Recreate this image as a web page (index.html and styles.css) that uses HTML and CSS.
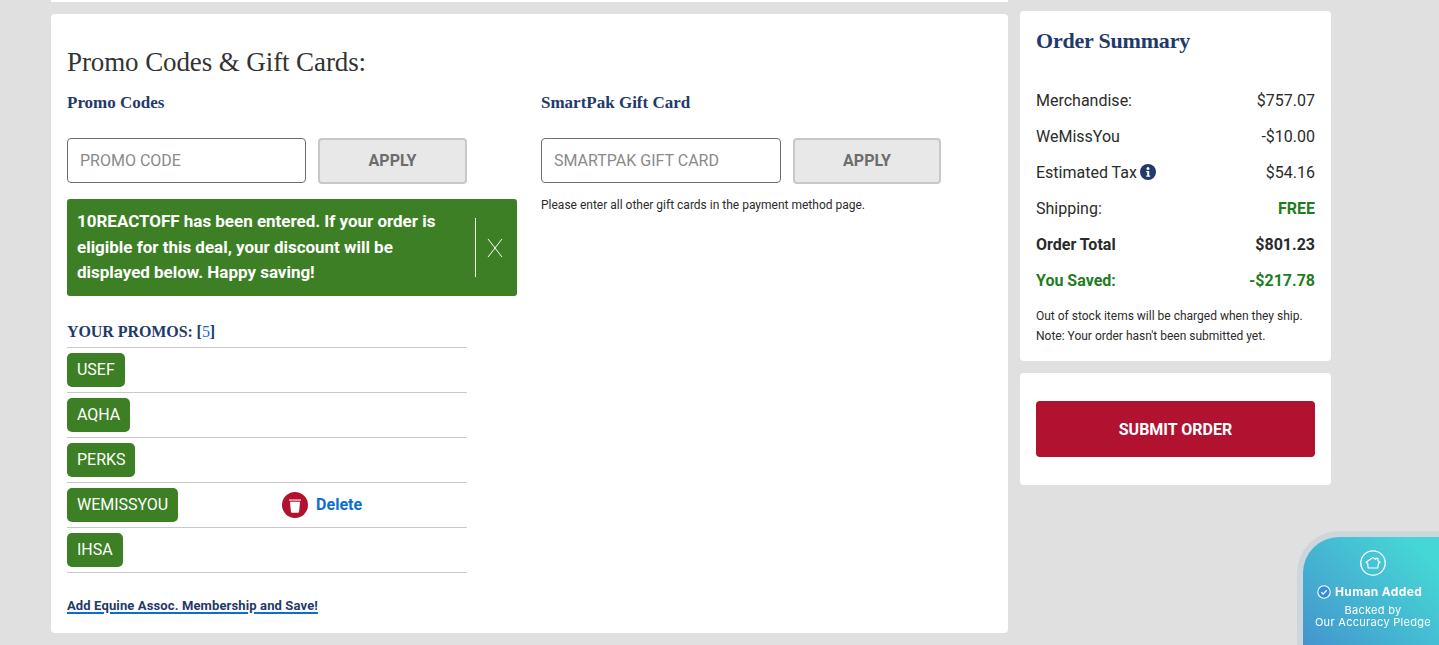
FILE: index.html
```html
<!DOCTYPE html>
<html lang="en">
<head>
<meta charset="utf-8">
<title>Checkout</title>
<link rel="stylesheet" href="styles.css">
</head>
<body>
<div class="page">
  <main class="main-col">
    <div class="top-strip"></div>
    <section class="card promo-card">
      <h2 class="promo-title">Promo Codes &amp; Gift Cards:</h2>
      <div class="promo-cols">
        <div class="col-left">
          <h3 class="sub-title">Promo Codes</h3>
          <div class="field-row">
            <input class="text-input input-promo" type="text" placeholder="PROMO CODE">
            <button class="apply-btn btn-promo" type="button">APPLY</button>
          </div>
          <div class="alert">
            <p class="alert-text">10REACTOFF has been entered. If your order is eligible for this deal, your discount will be displayed below. Happy saving!</p>
            <div class="alert-close">
              <svg class="alert-x" width="16" height="20" viewBox="0 0 16 20"><path d="M1 1 L15 19 M15 1 L1 19" stroke="#fff" stroke-width="1" fill="none"/></svg>
            </div>
          </div>
          <h4 class="your-promos">YOUR PROMOS: [<span class="count">5</span>]</h4>
          <ul class="promo-list">
            <li class="promo-row"><span class="tag">USEF</span></li>
            <li class="promo-row"><span class="tag">AQHA</span></li>
            <li class="promo-row"><span class="tag">PERKS</span></li>
            <li class="promo-row">
              <span class="tag tag-fixed">WEMISSYOU</span>
              <a class="delete" href="#">
                <svg class="trash" width="26" height="26" viewBox="0 0 26 26"><circle cx="13" cy="13" r="13" fill="#b0122f"/><path d="M7 7.3h12v1.5H7z" fill="#f0b9c4"/><path d="M8 9.8h10l-.9 9.6c-.1.8-.6 1.3-1.3 1.3h-5.6c-.7 0-1.2-.5-1.3-1.3z" fill="#fff"/></svg>
                <span>Delete</span>
              </a>
            </li>
            <li class="promo-row"><span class="tag">IHSA</span></li>
          </ul>
          <a class="assoc-link" href="#">Add Equine Assoc. Membership and Save!</a>
        </div>
        <div class="col-right">
          <h3 class="sub-title">SmartPak Gift Card</h3>
          <div class="field-row">
            <input class="text-input input-gift" type="text" placeholder="SMARTPAK GIFT CARD">
            <button class="apply-btn btn-gift" type="button">APPLY</button>
          </div>
          <p class="gift-note">Please enter all other gift cards in the payment method page.</p>
        </div>
      </div>
    </section>
  </main>
  <aside class="side-col">
    <section class="card summary-card">
      <h2 class="summary-title">Order Summary</h2>
      <div class="sum-rows">
        <div class="sum-row"><span>Merchandise:</span><span>$757.07</span></div>
        <div class="sum-row"><span>WeMissYou</span><span>-$10.00</span></div>
        <div class="sum-row"><span class="with-icon">Estimated Tax
          <svg class="info" width="16" height="16" viewBox="0 0 16 16"><circle cx="8" cy="8" r="8" fill="#1f3a6b"/><circle cx="8" cy="4.4" r="1.5" fill="#fff"/><path d="M6.2 7h3v4.6h1v1.2H6.2v-1.2h1V8.2h-1z" fill="#fff"/></svg></span><span>$54.16</span></div>
        <div class="sum-row"><span>Shipping:</span><span class="green strong">FREE</span></div>
        <div class="sum-row strong"><span>Order Total</span><span>$801.23</span></div>
        <div class="sum-row strong green"><span>You Saved:</span><span>-$217.78</span></div>
      </div>
      <p class="sum-note">Out of stock items will be charged when they ship.<br>Note: Your order hasn't been submitted yet.</p>
    </section>
    <section class="card submit-card">
      <button class="submit-btn" type="button">SUBMIT ORDER</button>
    </section>
  </aside>
</div>
<div class="badge">
  <svg class="badge-home" width="26" height="26" viewBox="0 0 26 26" fill="none" stroke="#fff"><circle cx="13" cy="13" r="12.2" stroke-width="1.3"/><path d="M6 12.2 L13 7.6 L15.8 9.4 V8.4 H18 V10.9 L20 12.2 L18.4 13.4 L17.8 18 H8.2 L7.6 13.4 Z" stroke-width="1.2" stroke-linejoin="round"/></svg>
  <div class="badge-head">
    <svg width="14" height="14" viewBox="0 0 14 14"><circle cx="7" cy="7" r="6.2" fill="#2f8fdc" stroke="#fff" stroke-width="1.1"/><path d="M4.3 7.2 L6.2 9 L9.7 5.3" stroke="#fff" stroke-width="1.3" fill="none"/></svg>
    <span>Human Added</span>
  </div>
  <div class="badge-sub">Backed by<br>Our Accuracy Pledge</div>
</div>
</body>
</html>
```
FILE: styles.css
```css
* { box-sizing: border-box; }
html, body { margin: 0; height: 100%; overflow: hidden; }
body { background: #e0e0e0; font-family: Roboto, "Liberation Sans", sans-serif; color: #2b2b2b; }
h2, h3, h4, p, ul { margin: 0; padding: 0; }
ul { list-style: none; }

.page { display: flex; align-items: flex-start; gap: 12px; padding-left: 51px; }
.main-col { width: 957px; }
.side-col { width: 311px; padding-top: 11px; display: flex; flex-direction: column; gap: 12px; }
.card { background: #fff; border-radius: 4px; }
.top-strip { height: 2px; background: #fff; margin-bottom: 12px; }

.promo-card { height: 619px; padding: 32px 16px 0; }
.promo-title { font: 400 27px/32px "Liberation Serif", serif; color: #333; letter-spacing: -.1px; }
.promo-cols { display: flex; margin-top: 12px; }
.col-left { width: 474px; }
.col-right { width: 400px; }
.sub-title { font: 700 17px/24px "Liberation Serif", serif; color: #1f3a6b; padding-top: 1px; box-sizing: content-box; }
.field-row { display: flex; margin-top: 23px; }
.text-input { height: 45px; border: 1px solid #6f6f6f; border-radius: 4px; padding: 0 12px; font: 400 16px Roboto, sans-serif; background: #fff; outline: 0; }
.text-input::placeholder { color: #8a8a8a; opacity: 1; }
.input-promo { width: 239px; }
.input-gift { width: 240px; }
.apply-btn { height: 46px; background: #e8e8e8; border: 2px solid #c8c8c8; border-radius: 4px; font: 700 16px Roboto, sans-serif; color: #6c6c6c; margin-left: 12px; padding: 0 0 2px; }
.btn-promo { width: 149px; }
.btn-gift { width: 148px; }

.alert { width: 450px; height: 97px; margin-top: 15px; background: #3c7f24; border-radius: 3px; display: flex; align-items: center; padding: 9px 0 9px 10px; color: #fff; }
.alert-text { width: 398px; padding-right: 30px; font: 700 17px/25.7px Roboto, sans-serif; letter-spacing: -.02px; }
.alert-close { height: 59px; border-left: 1px solid #fff; flex: 1; display: flex; align-items: center; padding-left: 11px; }

.your-promos { font: 700 16px/24px "Liberation Serif", serif; color: #1f3a6b; margin-top: 24px; letter-spacing: -.08px; }
.count { color: #0a6fd0; font-weight: 400; }
.promo-list { width: 400px; border-top: 1px solid #c8c8c8; margin-top: 3px; }
.promo-row { height: 45px; border-bottom: 1px solid #c8c8c8; display: flex; align-items: center; padding-bottom: 1px; }
.tag { background: #3c7f24; color: #fff; border-radius: 5px; height: 34px; line-height: 34px; padding: 0 10px; font-size: 16px; letter-spacing: -.03px; }
.tag-fixed { margin-right: 104px; }
.delete { display: flex; align-items: center; gap: 8px; color: #0a6fd0; font-weight: 700; font-size: 16px; text-decoration: none; }
.trash { display: block; }
.assoc-link { display: inline-block; margin-top: 24px; font-size: 13px; line-height: 18px; font-weight: 700; color: #1f3a6b; letter-spacing: .13px; text-decoration: underline; text-decoration-color: #0a6fd0; text-underline-offset: 2px; text-decoration-thickness: 1.5px; }
.gift-note { font-size: 12px; line-height: 16px; margin-top: 13px; }

.summary-card { height: 350px; padding: 16px 16px 0; }
.summary-title { font: 700 22px/28px "Liberation Serif", serif; color: #1f3a6b; letter-spacing: -.2px; }
.sum-rows { margin-top: 27px; }
.sum-row { display: flex; justify-content: space-between; align-items: center; height: 36px; font-size: 16px; }
.with-icon { display: flex; align-items: center; gap: 3px; }
.strong { font-weight: 700; }
.green { color: #1f7d1f; }
.sum-note { font-size: 12px; line-height: 20px; margin-top: 8px; }
.submit-card { height: 112px; padding: 28px 16px 0; }
.submit-btn { width: 100%; height: 56px; background: #b0122f; border: 0; border-radius: 4px; color: #fff; font: 700 16px Roboto, sans-serif; padding: 0; }

.badge { position: fixed; left: 1297px; top: 531px; width: 150px; height: 130px; border: 6px solid #cdd6db; border-right: 0; border-bottom: 0; border-top-left-radius: 42px; background: linear-gradient(45deg, #4490cc 0%, #45d6d6 85%); color: #fff; text-align: center; padding-right: 10px; }
.badge-home { display: block; margin: 13px auto 0 57px; }
.badge-head { display: flex; align-items: center; gap: 4px; margin: 8px 0 0 14px; font: 700 12px/16px Inter, sans-serif; letter-spacing: .35px; white-space: nowrap; }
.badge-sub { font: 400 11px/12px Inter, sans-serif; margin-top: 4px; letter-spacing: .3px; white-space: nowrap; padding-left: 6px; }
```
